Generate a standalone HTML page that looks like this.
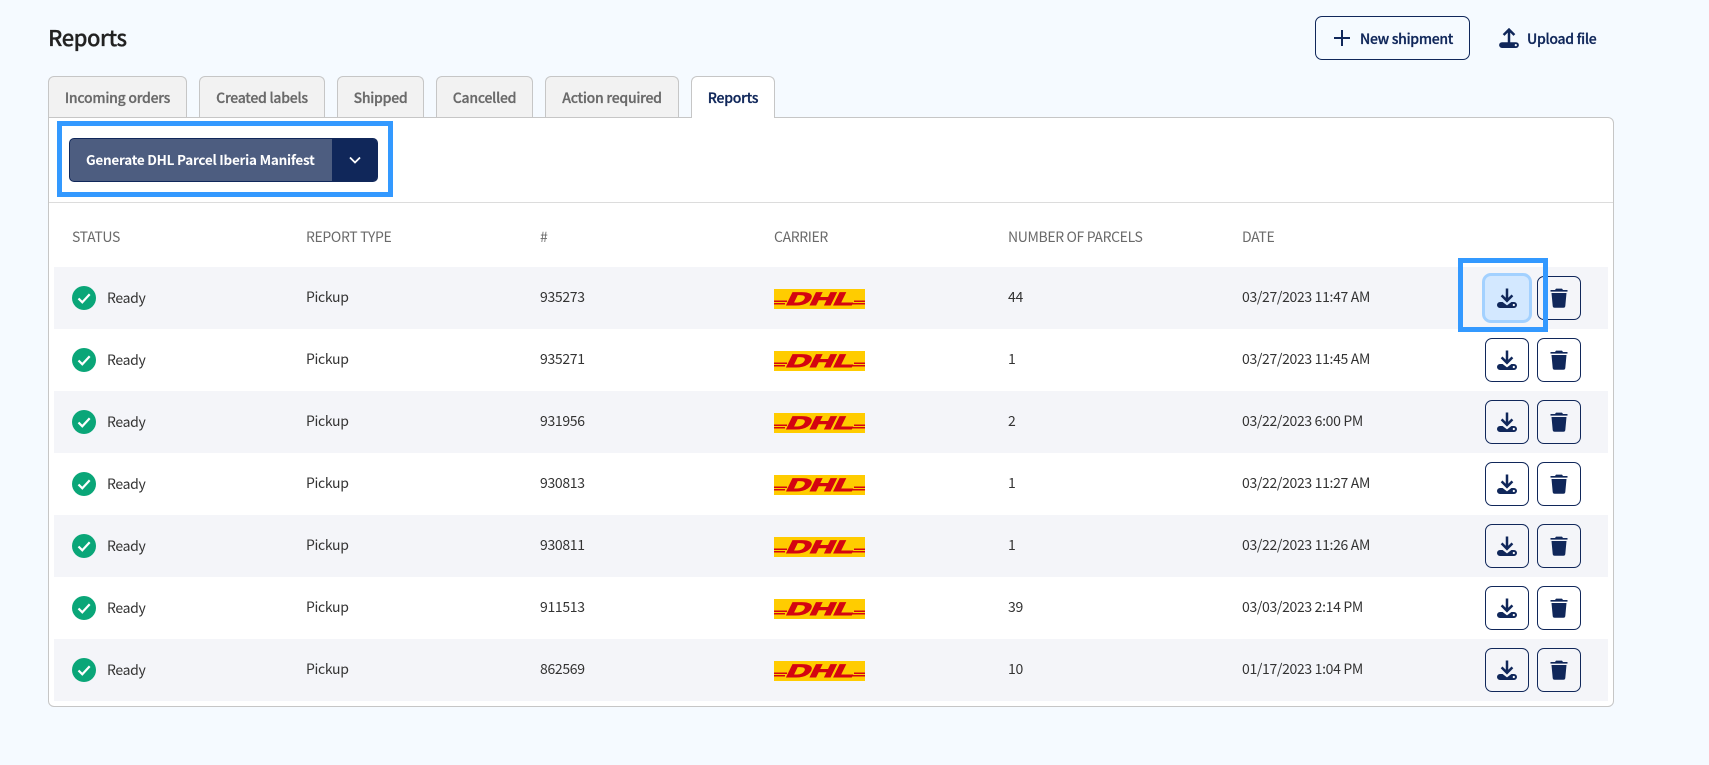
<!DOCTYPE html>
<html lang="en"><head><meta charset="utf-8"><title>Reports</title>
<style>
html,body{margin:0;padding:0;width:1709px;height:765px;overflow:hidden;background:#f5faff}
body{position:relative;font-family:"Noto Sans CJK JP","Liberation Sans",sans-serif;color:#333;-webkit-font-smoothing:antialiased}
.a{position:absolute;white-space:nowrap}
.t{line-height:20px;height:20px}
.h1{left:48px;top:22px;font-size:22px;line-height:30px;font-weight:500;color:#222;letter-spacing:-.5px;-webkit-text-stroke:.25px #222}
.tab{position:absolute;top:76px;height:41px;box-sizing:border-box;border:1px solid #c6c6c6;border-bottom:none;border-radius:6px 6px 0 0;background:#f2f2f2;color:#6a6a6a;font-size:14px;font-weight:500;line-height:43px;text-align:center;letter-spacing:-.25px;-webkit-text-stroke:.3px #6a6a6a}
.tab.on{background:#fff;color:#10275a;height:42px;z-index:3;-webkit-text-stroke:.3px #10275a}
.card{position:absolute;left:48px;top:117px;width:1566px;height:590px;box-sizing:border-box;border:1px solid #c6c6c6;border-radius:0 6px 6px 6px;background:#fff}
.div{position:absolute;left:49px;top:202px;width:1564px;height:1px;background:#dcdcdc}
.row{position:absolute;left:54px;width:1554px;height:62px;background:#fff}
.row.g{background:#f4f5f9}
.th{position:absolute;top:227px;font-size:14px;line-height:20px;color:#6a6a6a;white-space:nowrap;letter-spacing:-.36px}
.c{position:absolute;font-size:14px;line-height:20px;color:#333;white-space:nowrap;letter-spacing:-.33px}
.hb{font-size:14px;font-weight:500;color:#10275a;letter-spacing:-.3px;-webkit-text-stroke:.3px #10275a}
.btn{position:absolute;width:44px;height:44px;box-sizing:border-box;border:1px solid #10275a;border-radius:7px;background:transparent}
.btn svg{position:absolute;left:11px;top:11px;width:20px;height:20px}
</style></head>
<body>
<svg width="0" height="0" style="position:absolute">
<symbol id="dl" viewBox="0 0 20 20"><path d="M10 .5v11.500M4.600 7.400L10 12.800l5.400-5.400" fill="none" stroke="#10275a" stroke-width="2.500"/><path d="M3 14h2.600L10 17.400 14.400 14H17a3 3 0 0 1 0 6H3a3 3 0 0 1 0-6z" fill="#10275a"/><circle cx="16.800" cy="17" r="1.100" fill="#fff"/></symbol>
<symbol id="up" viewBox="0 0 20 20"><path d="M10 2v13M4.600 7L10 1.600 15.400 7" fill="none" stroke="#10275a" stroke-width="2.500"/><path d="M3 14.200h14a2.900 2.900 0 0 1 0 5.800H3a2.900 2.900 0 0 1 0-5.800z" fill="#10275a"/><circle cx="16.800" cy="17.100" r="1.100" fill="#f5faff"/></symbol>
<symbol id="tr" viewBox="0 0 20 20"><path d="M7 .6h6l1 1.400h4.500v1.600h-17V2H6z" fill="#10275a"/><path d="M2.500 5h15l-1.200 13a2 2 0 0 1-2 1.800H5.700a2 2 0 0 1-2-1.800z" fill="#10275a"/></symbol>
<symbol id="ck" viewBox="0 0 24 24"><circle cx="12" cy="12" r="12" fill="#0aa678"/><path d="M6.500 12.500l3.800 3.800 7.400-8" fill="none" stroke="#fff" stroke-width="2.200"/></symbol>
<symbol id="dhl" viewBox="0 0 91 20"><rect width="91" height="20" fill="#fc0"/><g fill="#d40511"><rect x="0" y="11.500" width="13" height="1.500"/><rect x="0" y="14" width="11" height="1.500"/><rect x="80" y="11.500" width="11" height="1.500"/><rect x="78" y="14" width="13" height="1.500"/></g><text transform="translate(11 16) skewX(-26)" x="0" y="0" font-family="Liberation Sans" font-weight="700" font-size="18" fill="#d40511" textLength="67" lengthAdjust="spacingAndGlyphs" stroke="#d40511" stroke-width="1.100">DHL</text></symbol>
</svg>

<div class="a h1">Reports</div>

<div class="a" style="left:1315px;top:16px;width:155px;height:44px;box-sizing:border-box;border:1px solid #10275a;border-radius:7px"></div>
<svg class="a" style="left:1334px;top:30px" width="16" height="16" viewBox="0 0 16 16"><path d="M7 0h2v7h7v2H9v7H7V9H0V7h7z" fill="#10275a"/></svg>
<div class="a t hb" style="left:1360px;top:29px">New shipment</div>
<svg class="a" style="left:1499px;top:28px" width="20" height="20"><use href="#up"/></svg>
<div class="a t hb" style="left:1527px;top:29px">Upload file</div>

<div class="card"></div>
<div class="tab" style="left:48px;width:139px">Incoming orders</div>
<div class="tab" style="left:199px;width:126px">Created labels</div>
<div class="tab" style="left:337px;width:87px">Shipped</div>
<div class="tab" style="left:436px;width:97px">Cancelled</div>
<div class="tab" style="left:545px;width:134px">Action required</div>
<div class="tab on" style="left:691px;width:84px">Reports</div>

<div class="a" style="left:69px;top:138px;width:309px;height:44px;box-sizing:border-box;border:1px solid #10275a;border-radius:5px;background:#4d5d80;overflow:hidden">
<div style="position:absolute;left:262px;top:0;width:47px;height:44px;background:#10275a"></div>
<div class="a" style="left:16px;top:10px;font-size:13.5px;line-height:20px;font-weight:700;color:#fff;letter-spacing:-.25px">Generate DHL Parcel Iberia Manifest</div>
<svg class="a" style="left:279px;top:15px" width="12" height="12" viewBox="0 0 12 12"><path d="M1 3.500l5 5 5-5" fill="none" stroke="#fff" stroke-width="1.800"/></svg>
</div>
<div class="a" style="left:57px;top:121px;width:336px;height:76px;box-sizing:border-box;border:5px solid #3399ff"></div>

<div class="div"></div>
<div class="th" style="left:72px">STATUS</div>
<div class="th" style="left:306px">REPORT TYPE</div>
<div class="th" style="left:540px">#</div>
<div class="th" style="left:774px">CARRIER</div>
<div class="th" style="left:1008px">NUMBER OF PARCELS</div>
<div class="th" style="left:1242px">DATE</div>

<div class="row g" style="top:267px"></div>
<div class="row" style="top:329px"></div>
<div class="row g" style="top:391px"></div>
<div class="row" style="top:453px"></div>
<div class="row g" style="top:515px"></div>
<div class="row" style="top:577px"></div>
<div class="row g" style="top:639px"></div>

<svg class="a" style="left:72px;top:286px" width="24" height="24"><use href="#ck"/></svg><div class="c" style="left:107px;top:288px">Ready</div><div class="c" style="left:306px;top:287px">Pickup</div><div class="c" style="left:540px;top:287px">935273</div><svg class="a" style="left:774px;top:289px" width="91" height="20"><use href="#dhl"/></svg><div class="c" style="left:1008px;top:287px">44</div><div class="c" style="left:1242px;top:287px">03/27/2023 11:47 AM</div>
<div class="btn" style="left:1482px;top:273px;width:50px;height:50px;border:3px solid #a3d1ff;background:#d3e8ff;border-radius:9px"><svg style="left:12px;top:12px"><use href="#dl"/></svg></div>
<div class="btn" style="left:1537px;top:276px"><svg><use href="#tr"/></svg></div>

<svg class="a" style="left:72px;top:348px" width="24" height="24"><use href="#ck"/></svg><div class="c" style="left:107px;top:350px">Ready</div><div class="c" style="left:306px;top:349px">Pickup</div><div class="c" style="left:540px;top:349px">935271</div><svg class="a" style="left:774px;top:351px" width="91" height="20"><use href="#dhl"/></svg><div class="c" style="left:1008px;top:349px">1</div><div class="c" style="left:1242px;top:349px">03/27/2023 11:45 AM</div>
<div class="btn" style="left:1485px;top:338px"><svg><use href="#dl"/></svg></div><div class="btn" style="left:1537px;top:338px"><svg><use href="#tr"/></svg></div>

<svg class="a" style="left:72px;top:410px" width="24" height="24"><use href="#ck"/></svg><div class="c" style="left:107px;top:412px">Ready</div><div class="c" style="left:306px;top:411px">Pickup</div><div class="c" style="left:540px;top:411px">931956</div><svg class="a" style="left:774px;top:413px" width="91" height="20"><use href="#dhl"/></svg><div class="c" style="left:1008px;top:411px">2</div><div class="c" style="left:1242px;top:411px">03/22/2023 6:00 PM</div>
<div class="btn" style="left:1485px;top:400px"><svg><use href="#dl"/></svg></div><div class="btn" style="left:1537px;top:400px"><svg><use href="#tr"/></svg></div>

<svg class="a" style="left:72px;top:472px" width="24" height="24"><use href="#ck"/></svg><div class="c" style="left:107px;top:474px">Ready</div><div class="c" style="left:306px;top:473px">Pickup</div><div class="c" style="left:540px;top:473px">930813</div><svg class="a" style="left:774px;top:475px" width="91" height="20"><use href="#dhl"/></svg><div class="c" style="left:1008px;top:473px">1</div><div class="c" style="left:1242px;top:473px">03/22/2023 11:27 AM</div>
<div class="btn" style="left:1485px;top:462px"><svg><use href="#dl"/></svg></div><div class="btn" style="left:1537px;top:462px"><svg><use href="#tr"/></svg></div>

<svg class="a" style="left:72px;top:534px" width="24" height="24"><use href="#ck"/></svg><div class="c" style="left:107px;top:536px">Ready</div><div class="c" style="left:306px;top:535px">Pickup</div><div class="c" style="left:540px;top:535px">930811</div><svg class="a" style="left:774px;top:537px" width="91" height="20"><use href="#dhl"/></svg><div class="c" style="left:1008px;top:535px">1</div><div class="c" style="left:1242px;top:535px">03/22/2023 11:26 AM</div>
<div class="btn" style="left:1485px;top:524px"><svg><use href="#dl"/></svg></div><div class="btn" style="left:1537px;top:524px"><svg><use href="#tr"/></svg></div>

<svg class="a" style="left:72px;top:596px" width="24" height="24"><use href="#ck"/></svg><div class="c" style="left:107px;top:598px">Ready</div><div class="c" style="left:306px;top:597px">Pickup</div><div class="c" style="left:540px;top:597px">911513</div><svg class="a" style="left:774px;top:599px" width="91" height="20"><use href="#dhl"/></svg><div class="c" style="left:1008px;top:597px">39</div><div class="c" style="left:1242px;top:597px">03/03/2023 2:14 PM</div>
<div class="btn" style="left:1485px;top:586px"><svg><use href="#dl"/></svg></div><div class="btn" style="left:1537px;top:586px"><svg><use href="#tr"/></svg></div>

<svg class="a" style="left:72px;top:658px" width="24" height="24"><use href="#ck"/></svg><div class="c" style="left:107px;top:660px">Ready</div><div class="c" style="left:306px;top:659px">Pickup</div><div class="c" style="left:540px;top:659px">862569</div><svg class="a" style="left:774px;top:661px" width="91" height="20"><use href="#dhl"/></svg><div class="c" style="left:1008px;top:659px">10</div><div class="c" style="left:1242px;top:659px">01/17/2023 1:04 PM</div>
<div class="btn" style="left:1485px;top:648px"><svg><use href="#dl"/></svg></div><div class="btn" style="left:1537px;top:648px"><svg><use href="#tr"/></svg></div>

<div class="a" style="left:1458px;top:258px;width:90px;height:74px;box-sizing:border-box;border:5px solid #3399ff"></div>
</body></html>
